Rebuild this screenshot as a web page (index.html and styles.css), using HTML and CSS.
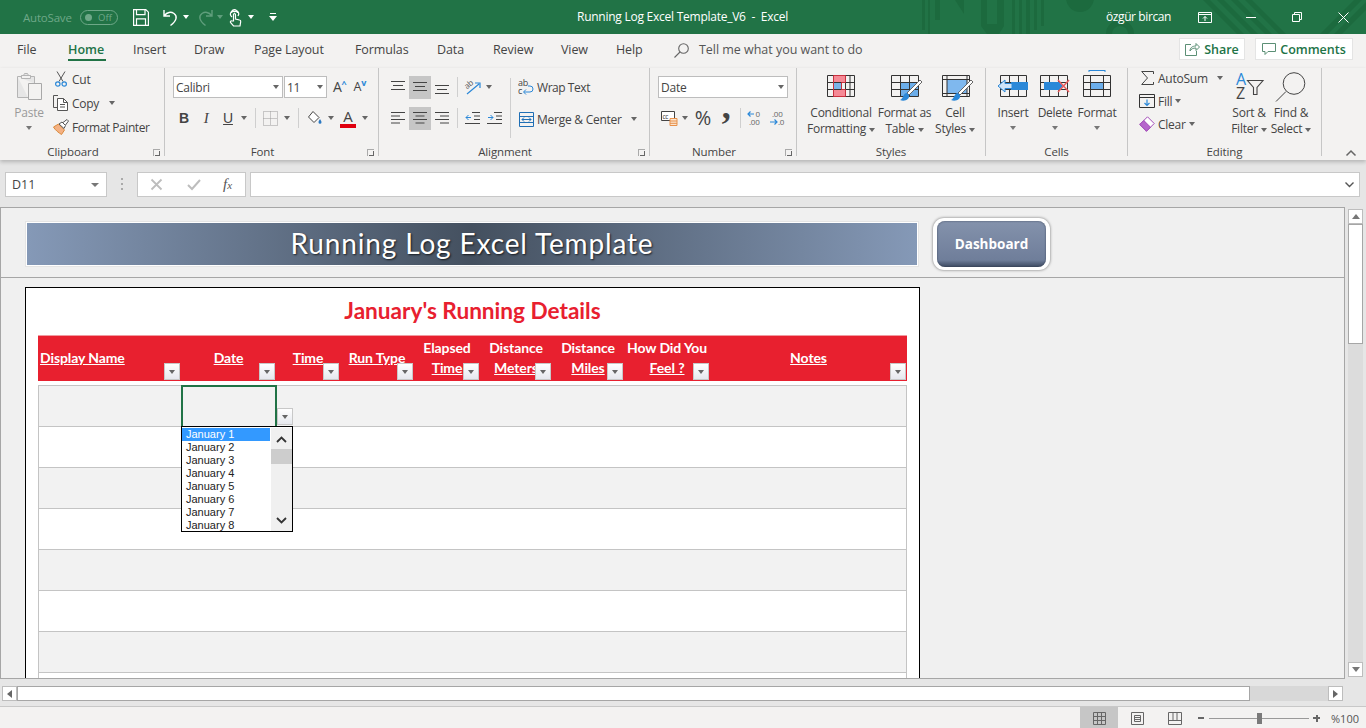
FILE: index.html
```html
<!DOCTYPE html>
<html lang="en">
<head>
<meta charset="utf-8">
<title>Running Log Excel Template_V6 - Excel</title>
<link rel="stylesheet" href="styles.css">
</head>
<body>
<div class="app">

<header class="titlebar">
  <svg class="tb-pattern" width="446" height="34" viewBox="0 0 446 34" fill="#1c6a3e">
    <path d="M2 0h3v30H2zM8 0h2v34H8zM15 0h5v20h-5zM35 0l9 14V0zM55 0h6v26l6 8h12l5-8V0h-7v24h-10V0zM92 0h3v34h-3zM99 0h3v34h-3zM106 0h4v34h-4zM114 0h3v30h-3zM121 0h3v26h-3z"/>
    <circle cx="160" cy="-2" r="14"/>
    <path d="M186 34a14 14 0 0 1 28 0h-6a8 8 0 0 0-16 0zM290 0l34 34h-7L283 0zM304 0l34 34h-7L297 0zM318 0l34 34h-7L311 0zM332 0l34 34h-7L325 0zM400 34l34-34h8l-34 34zM414 34l32-32v8l-24 24z"/>
  </svg>
  <div class="qat">
    <span class="autosave">AutoSave</span>
    <span class="toggle"><i class="toggle-dot"></i><span class="toggle-text">Off</span></span>
    <svg class="q-save" width="16" height="17" viewBox="0 0 16 17" fill="none" stroke="#fff" stroke-width="1.2"><path d="M.6.6h12.2l2.6 2.6v13.2H.6zM3.5.6v5h8.5v-5M3.5 16.4v-6.5h9v6.5"/></svg>
    <svg class="q-undo" width="15" height="17" viewBox="0 0 15 17" fill="none" stroke="#fff" stroke-width="1.4"><path d="M1 1v6h6M1.5 6.5C4 3 8 2.500 11 4.500c3.500 2.500 3 7-3.500 12"/></svg>
    <i class="caret caret-white q-c1"></i>
    <svg class="q-redo" width="15" height="17" viewBox="0 0 15 17" fill="none" stroke="#5f9e7c" stroke-width="1.4"><path d="M14 1v6H8M13.500 6.500C11 3 7 2.500 4 4.500c-3.500 2.500-3 7 3.500 12"/></svg>
    <i class="caret caret-dim q-c2"></i>
    <svg class="q-touch" width="14" height="19" viewBox="0 0 14 19" fill="none" stroke="#fff" stroke-width="1.2"><path d="M4 9a4 4 0 1 1 6-1M3.500 5a1.800 1.800 0 0 1 3-1.200 1.800 1.800 0 0 1 3 1.200M5.500 13V6.500a1 1 0 0 1 2 0V11l4 1a1.500 1.500 0 0 1 1.200 1.700L12 18H5.500L2.500 14.500c-.5-1 .5-2 1.500-1.500z"/></svg>
    <i class="caret caret-white q-c3"></i>
    <svg class="q-more" width="8" height="8" viewBox="0 0 8 8" fill="#fff"><path d="M1 0h6v1H1zM0 3h8L4 8z"/></svg>
  </div>
  <div class="doc-title">Running Log Excel Template_V6&nbsp; - &nbsp;Excel</div>
  <div class="account">
    <span class="user">özgür bircan</span>
    <svg class="w-display" width="14" height="11" viewBox="0 0 14 11" fill="none" stroke="#fff"><path d="M.5.500h13v10H.5zM.5 2.500h13M7 9V4.500M5 6.500l2-2 2 2"/></svg>
    <svg class="w-min" width="10" height="1" viewBox="0 0 10 1"><path d="M0 .5h10" stroke="#fff"/></svg>
    <svg class="w-max" width="10" height="10" viewBox="0 0 10 10" fill="none" stroke="#fff"><path d="M.5 2.500h7v7h-7zM2.500 2.500v-2h7v7h-2"/></svg>
    <svg class="w-close" width="11" height="11" viewBox="0 0 11 11" stroke="#fff"><path d="M.5.500l10 10M10.500.500l-10 10"/></svg>
  </div>
</header>

<nav class="tabs">
  <span class="tab">File</span>
  <span class="tab tab-on">Home</span>
  <span class="tab">Insert</span>
  <span class="tab">Draw</span>
  <span class="tab">Page Layout</span>
  <span class="tab">Formulas</span>
  <span class="tab">Data</span>
  <span class="tab">Review</span>
  <span class="tab">View</span>
  <span class="tab">Help</span>
  <svg class="search-ic" width="15" height="15" viewBox="0 0 15 15" fill="none" stroke="#666" stroke-width="1.1"><circle cx="9.500" cy="5.500" r="4.800"/><path d="M6 9l-5.500 5.500"/></svg>
  <span class="tab tell">Tell me what you want to do</span>
  <div class="tab-actions">
    <span class="act act-share">
      <svg width="15" height="14" viewBox="0 0 15 14" fill="none" stroke="#5b8f75"><path d="M6 2.500H.5v11h11V9M5 9c0-3 2-5 6-5V1.500L14.500 5 11 8.500V6C8 6 6 7 5 9z"/></svg>
      Share
    </span>
    <span class="act act-comments">
      <svg width="14" height="13" viewBox="0 0 14 13" fill="none" stroke="#5b8f75"><path d="M.5.500h13v8H6l-3 3v-3H.5z"/></svg>
      Comments
    </span>
  </div>
</nav>

<section class="ribbon">
  <!-- Clipboard -->
  <div class="group g-clip">
    <div class="big b-paste dim">
      <div class="big-ic">
        <svg width="28" height="30" viewBox="0 0 28 30" fill="none" stroke="#b4b4b4"><path d="M2.500 4.500h4v-1h2l1-2h3l1 2h2v1h4v7M13 25.500H2.500v-21" fill="#e6e6e6"/><path d="M6.500 3.500h9v3h-9z" fill="#f3f2f1"/><path d="M13.500 11.500h13v16h-13z" fill="#f3f2f1" stroke="#a8a8a8"/></svg>
      </div>
      <span>Paste</span>
      <i class="caret caret-line"></i>
    </div>
    <div class="stack s-clip">
      <div class="small"><span class="s-ic"><svg width="12" height="16" viewBox="0 0 12 16" fill="none"><path d="M2 .5l6 10M10 .5l-6 10" stroke="#555"/><circle cx="2.800" cy="13" r="2.200" stroke="#2b88d8" stroke-width="1.200"/><circle cx="9.200" cy="13" r="2.200" stroke="#2b88d8" stroke-width="1.200"/></svg></span>Cut</div>
      <div class="small"><span class="s-ic"><svg width="16" height="16" viewBox="0 0 16 16" fill="none" stroke="#555"><path d="M5 .5H.5v12H4"/><path d="M4.500 3.500h6l4 4v8h-10z" fill="#fff"/><path d="M10.500 3.500v4h4M7 9.500h5M7 12h5"/></svg></span>Copy<i class="caret c-copy"></i></div>
      <div class="small"><span class="s-ic"><svg width="16" height="16" viewBox="0 0 16 16"><path d="M.5 8l5-3 6 6-3 4.500C6 14 2 11 .5 8z" fill="#f4b183" stroke="#d98a3c"/><path d="M6 5l3-2 3.500 3.500L11 9.500zM10 3.500L14 .5l1.500 1.500-3 4" fill="#fff" stroke="#555"/></svg></span><span class="lbl-tight">Format Painter</span></div>
    </div>
    <div class="g-label">Clipboard</div>
    <i class="launcher"></i>
  </div>

  <!-- Font -->
  <div class="group g-font">
    <div class="rows">
      <div class="row">
        <span class="combo c-font">Calibri<i class="caret"></i></span>
        <span class="combo c-size">11<i class="caret"></i></span>
        <span class="grow-a a1">A<sup>^</sup></span>
        <span class="grow-a a2">A<sup>v</sup></span>
      </div>
      <div class="row">
        <span class="slot w22 fmt fmt-b">B</span>
        <span class="slot w22 fmt fmt-i">I</span>
        <span class="slot w22 fmt fmt-u">U</span>
        <span class="slot w10"><i class="caret"></i></span>
        <span class="slot w12"><i class="vsep"></i></span>
        <span class="slot w18"><svg width="15" height="15" viewBox="0 0 15 15" fill="none" stroke="#9a9a9a" stroke-dasharray="1 1"><path d="M.5.500h14v14H.5zM7.500.500v14M.5 7.500h14"/></svg></span>
        <span class="slot w16"><i class="caret"></i></span>
        <span class="slot w6"><i class="vsep"></i></span>
        <span class="slot w26"><svg width="15" height="14" viewBox="0 0 15 14"><path d="M6 .5l6 6-5 5-5.500-5.500z" fill="#fff" stroke="#444"/><path d="M13 8c-.8 1.500-1.500 2.300-1.500 3.200a1.500 1.500 0 0 0 3 0C14.500 10.300 13.800 9.500 13 8z" fill="#2b79c2"/></svg></span>
        <span class="slot w8"><i class="caret"></i></span>
        <span class="slot w26 color-a"><span>A</span><i class="red-bar"></i></span>
        <span class="slot w8"><i class="caret"></i></span>
      </div>
    </div>
    <div class="g-label">Font</div>
    <i class="launcher"></i>
  </div>

  <!-- Alignment -->
  <div class="group g-align">
    <div class="rows r-align">
      <div class="row">
        <span class="slot w22"><svg width="14" height="12" viewBox="0 0 14 12" stroke="#444"><path d="M0 .5h14M2 4.500h10M0 8.500h14"/></svg></span>
        <span class="slot w22 on"><svg width="14" height="10" viewBox="0 0 14 10" stroke="#444"><path d="M0 .5h14M2 4.500h10M0 8.500h14"/></svg></span>
        <span class="slot w22"><svg class="lower" width="14" height="10" viewBox="0 0 14 10" stroke="#444"><path d="M0 .5h14M2 4.500h10M0 8.500h14"/></svg></span>
        <span class="slot w8"><i class="vsep"></i></span>
        <span class="slot w36"><svg width="16" height="16" viewBox="0 0 16 16" fill="none"><text x="0" y="8" font-size="8" fill="#555" font-family="Open Sans, sans-serif" transform="rotate(-40 4 8)">ab</text><path d="M1 15L13 5M9 4h5v5" stroke="#2b88d8" stroke-width="1.200"/></svg><i class="caret c-inline"></i></span>
      </div>
      <div class="row">
        <span class="slot w22"><svg width="14" height="12" viewBox="0 0 14 12" stroke="#444"><path d="M0 .5h14M0 4h9M0 7.500h14M0 11h9"/></svg></span>
        <span class="slot w22 on"><svg width="14" height="12" viewBox="0 0 14 12" stroke="#444"><path d="M0 .5h14M2.500 4h9M0 7.500h14M2.500 11h9"/></svg></span>
        <span class="slot w22"><svg width="14" height="12" viewBox="0 0 14 12" stroke="#444"><path d="M0 .5h14M5 4h9M0 7.500h14M5 11h9"/></svg></span>
        <span class="slot w8"><i class="vsep"></i></span>
        <span class="slot w22"><svg width="15" height="12" viewBox="0 0 15 12" fill="none" stroke="#444"><path d="M7 .5h8M9 4h6M9 7.500h6M0 11.500h15"/><path d="M6 5.500H1M3.500 3L1 5.500 3.500 8" stroke="#2b88d8"/></svg></span>
        <span class="slot w22"><svg width="15" height="12" viewBox="0 0 15 12" fill="none" stroke="#444"><path d="M7 .5h8M9 4h6M9 7.500h6M0 11.500h15"/><path d="M1 5.500h5M3.500 3L6 5.500 3.500 8" stroke="#2b88d8"/></svg></span>
      </div>
    </div>
    <i class="vsep tall"></i>
    <div class="rows r-wrap">
      <div class="row"><span class="s-ic"><svg width="16" height="18" viewBox="0 0 16 18" fill="none"><text x="0" y="8" font-size="9" fill="#444" font-family="Open Sans, sans-serif">ab</text><text x="0" y="16" font-size="9" fill="#444" font-family="Open Sans, sans-serif">c</text><path d="M6 14h6a3 3 0 0 0 0-6H10M8 11.500L5.500 14 8 16.500" stroke="#2b88d8"/></svg></span><span class="lbl lbl-tight">Wrap Text</span></div>
      <div class="row"><span class="s-ic"><svg width="15" height="15" viewBox="0 0 15 15" fill="none" stroke="#1f6fb5"><path d="M.5.500h14v14H.5zM.5 4.500h14M.5 10.500h14"/><path d="M3 7.500h9M5 5.500l-2 2 2 2M10 5.500l2 2-2 2"/></svg></span><span class="lbl">Merge &amp; Center</span><i class="caret c-merge"></i></div>
    </div>
    <div class="g-label">Alignment</div>
    <i class="launcher"></i>
  </div>

  <!-- Number -->
  <div class="group g-num">
    <div class="rows">
      <div class="row"><span class="combo c-num">Date<i class="caret"></i></span></div>
      <div class="row">
        <span class="slot w22"><svg width="17" height="16" viewBox="0 0 17 16" fill="none"><path d="M.5 1.500h13v9H.5z" stroke="#444" fill="#fff"/><text x="1.500" y="8.500" font-size="6.500" fill="#333" font-family="Open Sans, sans-serif">cc</text><path d="M9 8.500h7v7H9z" fill="#fbe5d0" stroke="#e8914a"/><path d="M9 11h7M9 13.300h7" stroke="#e8914a"/></svg></span>
        <span class="slot w10"><i class="caret"></i></span>
        <span class="slot w26 pct">%</span>
        <span class="slot w20"><span class="comma">,</span></span>
        <span class="slot w8"><i class="vsep"></i></span>
        <span class="slot w21"><svg width="16" height="16" viewBox="0 0 16 16" fill="none"><path d="M7 4H1M3.500 1.500L1 4l2.500 2.500" stroke="#2b88d8" stroke-width="1.200"/><text x="8.500" y="7" font-size="8" fill="#666" font-family="Open Sans, sans-serif">0</text><text x="2" y="15" font-size="8" fill="#666" font-family="Open Sans, sans-serif">.00</text></svg></span>
        <span class="slot w23"><svg width="16" height="16" viewBox="0 0 16 16" fill="none"><text x="3" y="7" font-size="8" fill="#666" font-family="Open Sans, sans-serif">.00</text><path d="M1 12h7M5.500 9.500L8 12l-2.500 2.500" stroke="#2b88d8" stroke-width="1.200"/><text x="9" y="15" font-size="8" fill="#666" font-family="Open Sans, sans-serif">.0</text></svg></span>
      </div>
    </div>
    <div class="g-label">Number</div>
    <i class="launcher"></i>
  </div>

  <!-- Styles -->
  <div class="group g-styles">
    <div class="big b-cf">
      <div class="big-ic"><svg width="28" height="22" viewBox="0 0 28 22"><path d="M6 1h12v6H6zM6 15h12v6H6z" fill="#f58a96"/><path d="M6 8h8v6H6z" fill="#79b4e8"/><path d="M.5.500h27v21H.5zM.5 7.500h27M.5 14.500h27M6.500.500v21M18.500.500v21M23 .5v21" fill="none" stroke="#333"/><path d="M6.500.500h12v7h-4v7h4v7h-12z" fill="none" stroke="#c9303e"/></svg></div>
      <span>Conditional</span><span>Formatting<i class="caret c-inline"></i></span>
    </div>
    <div class="big b-fat">
      <div class="big-ic"><svg class="nudge" width="30" height="28" viewBox="0 0 30 28"><path d="M10 7h18v14H10z" fill="#6caeea"/><path d="M.5.500h27v21H.5zM.5 7.500h27M.5 14.500h27M9.500.500v21M18.500.500v21" fill="none" stroke="#333"/><path d="M29 5l2 2-13 13-2-2z" fill="#fff" stroke="#666"/><path d="M16 18c-4 0-3 5-7 7 5 2 10-1 9-5z" fill="#2b88d8"/></svg></div>
      <span>Format as</span><span>Table<i class="caret c-inline"></i></span>
    </div>
    <div class="big b-cs">
      <div class="big-ic"><svg class="nudge" width="30" height="28" viewBox="0 0 30 28"><path d="M5 5h20v13H5z" fill="#7fb8ee"/><path d="M.5.500h27v21H.5zM.5 4.500h27M.5 18.500h27M5 .5v21M25 .5v21" fill="none" stroke="#333"/><path d="M29 5l2 2-13 13-2-2z" fill="#fff" stroke="#666"/><path d="M16 18c-4 0-3 5-7 7 5 2 10-1 9-5z" fill="#2b88d8"/></svg></div>
      <span>Cell</span><span>Styles<i class="caret c-inline"></i></span>
    </div>
    <div class="g-label">Styles</div>
  </div>

  <!-- Cells -->
  <div class="group g-cells">
    <div class="big b-cell">
      <div class="big-ic"><svg width="32" height="22" viewBox="0 0 32 22"><path d="M3.500.500h26v21h-26zM12.500.500v21M21.500.500v21M3.500 7.500h26M3.500 14.500h26" fill="none" stroke="#333"/><path d="M14 7h17v8H14z" fill="#2b88d8"/><path d="M1 11l7-6v3.500h7v5H8V17z" fill="#cfe4f8" stroke="#2b88d8"/></svg></div>
      <span>Insert</span><i class="caret caret-line"></i>
    </div>
    <div class="big b-cell">
      <div class="big-ic"><svg width="30" height="22" viewBox="0 0 30 22"><path d="M.5.500h27v21H.5zM9.500.500v21M18.500.500v21M.5 7.500h27M.5 14.500h27" fill="none" stroke="#333"/><path d="M4 7h15v8H4z" fill="#2b88d8"/><path d="M19 7l4 4-4 4z" fill="#2b88d8"/><path d="M18 5l11 12M29 5L18 17" stroke="#ea5b5b" stroke-width="1.500"/></svg></div>
      <span>Delete</span><i class="caret caret-line"></i>
    </div>
    <div class="big b-cell">
      <div class="big-ic rise"><svg width="28" height="28" viewBox="0 0 28 28"><path d="M6 .5h16M6 0v2M22 0v2" stroke="#2b88d8" fill="none"/><path d="M8 13h13v7H8z" fill="#6caeea"/><path d="M.5 5.500h27v21H.5zM.5 12.500h27M.5 19.500h27M7.500 5.500v21M20.500 5.500v21" fill="none" stroke="#333"/></svg></div>
      <span>Format</span><i class="caret caret-line"></i>
    </div>
    <div class="g-label">Cells</div>
  </div>

  <!-- Editing -->
  <div class="group g-edit">
    <div class="stack s-edit">
      <div class="small"><span class="s-ic"><svg width="13" height="14" viewBox="0 0 13 14" fill="none" stroke="#444"><path d="M12.500 3V.5H.7L6.500 7 .7 13.500h11.800V11"/></svg></span>AutoSum<i class="caret c-auto"></i></div>
      <div class="small"><span class="s-ic"><svg width="16" height="14" viewBox="0 0 16 14" fill="none"><path d="M.5.500h15v13H.5zM.5 3.500h15" stroke="#333"/><path d="M8 5.500v6M5.500 9L8 11.500 10.500 9" stroke="#2b88d8" stroke-width="1.200"/></svg></span>Fill<i class="caret c-inline"></i></div>
      <div class="small"><span class="s-ic"><svg width="16" height="16" viewBox="0 0 16 16"><path d="M.8 8.500L8.500.8l6.700 6.700-7.700 7.700z" fill="#fff" stroke="#a24bb8"/><path d="M.8 8.500l4-4 6.700 6.700-4 4z" fill="#b667cc" stroke="#a24bb8"/></svg></span>Clear<i class="caret c-inline"></i></div>
    </div>
    <div class="big b-sort">
      <div class="big-ic"><svg width="30" height="30" viewBox="0 0 30 30" fill="none"><text x="2" y="13" font-size="16" fill="#2b88d8" font-family="Open Sans, sans-serif">A</text><text x="2" y="27" font-size="16" fill="#444" font-family="Open Sans, sans-serif">Z</text><path d="M13.500 8.500h15.500l-6 7v7h-3.500v-7z" stroke="#444" stroke-width="1.100"/></svg></div>
      <span>Sort &amp;</span><span>Filter<i class="caret c-inline"></i></span>
    </div>
    <div class="big b-sort">
      <div class="big-ic"><svg width="32" height="30" viewBox="0 0 32 30" fill="none" stroke="#444"><circle cx="19" cy="11.500" r="10.800"/><path d="M11 19.500L1 29.500"/></svg></div>
      <span>Find &amp;</span><span>Select<i class="caret c-inline"></i></span>
    </div>
    <div class="g-label">Editing</div>
  </div>

  <svg class="collapse" width="10" height="6" viewBox="0 0 10 6" fill="none" stroke="#666" stroke-width="1.500"><path d="M.5 5.500L5 1l4.500 4.500"/></svg>
</section>

<div class="formula">
  <div class="namebox">D11<i class="caret"></i></div>
  <div class="dots"></div>
  <div class="fx-btns">
    <svg width="11" height="11" viewBox="0 0 11 11" stroke="#bdbdbd" stroke-width="1.800"><path d="M.5.500l10 10M10.500.500l-10 10"/></svg>
    <svg width="14" height="11" viewBox="0 0 14 11" fill="none" stroke="#bdbdbd" stroke-width="2"><path d="M1 6l4 4 8-9"/></svg>
    <span class="fx">f<span class="fx-x">x</span></span>
  </div>
  <div class="fx-input"><svg width="9" height="6" viewBox="0 0 9 6" fill="none" stroke="#555" stroke-width="1.400"><path d="M.5.500l4 4 4-4"/></svg></div>
</div>

<main class="workspace">
  <div class="sheet">
    <div class="band">
      <div class="banner">Running Log Excel Template</div>
      <div class="dash"><span class="dash-in">Dashboard</span></div>
    </div>
    <div class="card">
      <h1 class="card-title">January's Running Details</h1>
      <div class="thead">
        <div class="th th-name"><u>Display Name</u><i class="fbtn"></i></div>
        <div class="th th-date"><u>Date</u><i class="fbtn"></i></div>
        <div class="th th-time"><u>Time</u><i class="fbtn"></i></div>
        <div class="th th-type"><u>Run Type</u><i class="fbtn"></i></div>
        <div class="th th-el"><span>Elapsed</span><u>Time</u><i class="fbtn"></i></div>
        <div class="th th-me"><span>Distance</span><u>Meters</u><i class="fbtn"></i></div>
        <div class="th th-mi"><span>Distance</span><u>Miles</u><i class="fbtn"></i></div>
        <div class="th th-fe"><span>How Did You</span><u>Feel ?</u><i class="fbtn"></i></div>
        <div class="th th-no"><u>Notes</u><i class="fbtn"></i></div>
      </div>
      <div class="tbody">
        <div class="tr tr-first">
          <div class="sel-cell"></div>
          <i class="fbtn cell-btn"></i>
          <div class="dropdown">
            <ul class="dd-list">
              <li class="dd-on">January 1</li>
              <li>January 2</li>
              <li>January 3</li>
              <li>January 4</li>
              <li>January 5</li>
              <li>January 6</li>
              <li>January 7</li>
              <li>January 8</li>
            </ul>
            <div class="dd-scroll">
              <svg width="11" height="7" viewBox="0 0 11 7" fill="none" stroke="#333" stroke-width="1.800"><path d="M1 6l4.500-4.500L10 6"/></svg>
              <i class="dd-thumb"></i>
              <svg class="dd-down" width="11" height="7" viewBox="0 0 11 7" fill="none" stroke="#333" stroke-width="1.800"><path d="M1 1l4.500 4.500L10 1"/></svg>
            </div>
          </div>
        </div>
        <div class="tr"></div>
        <div class="tr"></div>
        <div class="tr"></div>
        <div class="tr"></div>
        <div class="tr"></div>
        <div class="tr"></div>
        <div class="tr"></div>
      </div>
    </div>
  </div>
  <div class="vscroll">
    <span class="sb-btn"><i class="tri tri-up"></i></span>
    <span class="v-thumb"></span>
    <span class="v-track"></span>
    <span class="sb-btn"><i class="tri tri-down"></i></span>
  </div>
</main>

<div class="hscroll">
  <span class="sb-btn"><i class="tri tri-left"></i></span>
  <span class="h-thumb"></span>
  <span class="h-track"></span>
  <span class="sb-btn"><i class="tri tri-right"></i></span>
</div>

<footer class="status">
  <span class="view view-on"><svg width="13" height="13" viewBox="0 0 13 13" fill="none" stroke="#666"><path d="M.5.500h12v12H.5zM4.500.500v12M8.500.500v12M.5 4.500h12M.5 8.500h12"/></svg></span>
  <span class="view"><svg width="13" height="13" viewBox="0 0 13 13" fill="none" stroke="#666"><path d="M.5.500h12v12H.5zM3.500 3.500h6v6h-6zM3.500 5.500h6M3.500 7.500h6"/></svg></span>
  <span class="view"><svg width="14" height="13" viewBox="0 0 14 13" fill="none" stroke="#666"><path d="M.5.500h13v12H.5zM.5 8.500h13M5 .5v8M9 .5v8"/></svg></span>
  <span class="zoom-minus"></span>
  <span class="zoom-line"><i class="zoom-thumb"></i></span>
  <span class="zoom-plus"></span>
  <span class="zoom-val">%100</span>
</footer>

</div>
</body>
</html>
```

FILE: styles.css
```css
* { box-sizing: border-box; }
html, body { margin: 0; padding: 0; }
body { width: 1366px; height: 728px; overflow: hidden; font-family: "Open Sans", "Noto Sans", sans-serif; color: #444; background: #f3f2f1; }
i { display: block; font-style: normal; }
svg { display: block; flex: none; overflow: visible; }
.app { width: 1366px; height: 728px; display: flex; flex-direction: column; overflow: hidden; }

/* carets */
.caret { width: 0; height: 0; border: 3px solid transparent; border-top: 4px solid #666; border-bottom: 0; flex: none; }
.caret-white { border-top-color: #fff; }
.caret-dim { border-top-color: #5f9e7c; }
.caret-line { margin-top: 5px; border-top-color: #777; }
.c-inline { display: inline-block; vertical-align: middle; margin-left: 3px; }

/* title bar */
.titlebar { position: relative; height: 34px; flex: none; background: #217346; color: #fff; display: grid; grid-template-columns: 470px 425px 471px; align-items: center; overflow: hidden; }
.tb-pattern { position: absolute; left: 920px; top: 0; overflow: hidden; }
.qat { position: relative; display: flex; align-items: center; padding-left: 23px; }
.autosave { width: 57px; font-size: 11.500px; color: #6ea888; letter-spacing: -0.200px; }
.toggle { width: 38px; height: 15px; border: 1px solid #6ea888; border-radius: 8px; display: flex; align-items: center; padding-left: 4px; color: #6ea888; font-size: 9.500px; }
.toggle-dot { width: 7px; height: 7px; border-radius: 50%; background: #6ea888; margin-right: 6px; }
.q-save { margin-left: 15px; }
.q-undo { margin-left: 14px; }
.q-c1 { margin-left: 5px; }
.q-redo { margin-left: 9px; }
.q-c2 { margin-left: 4px; }
.q-touch { margin-left: 5px; }
.q-c3 { margin-left: 6px; }
.q-more { margin-left: 15px; }
.doc-title { position: relative; text-align: center; font-size: 12px; white-space: nowrap; letter-spacing: -0.250px; padding-bottom: 2px; }
.account { position: relative; display: flex; align-items: center; padding-left: 211px; }
.user { width: 66px; font-size: 12px; white-space: nowrap; letter-spacing: -0.400px; padding-bottom: 2px; }
.w-display { margin-left: 26px; }
.w-min { margin-left: 34px; }
.w-max { margin-left: 36px; }
.w-close { margin-left: 36px; }

/* tabs */
.tabs { height: 34px; flex: none; position: relative; background: #f3f2f1; display: grid; grid-template-columns: 51px 65px 61px 60px 101px 82px 56px 68px 55px 58px 25px auto; padding: 0 0 2px 17px; align-items: center; font-size: 12.500px; color: #444; }
.tab { white-space: nowrap; letter-spacing: -0.100px; line-height: 30px; }
.tab-on { position: relative; color: #217346; font-weight: 600; letter-spacing: 0; }
.tab-on::after { content: ""; position: absolute; left: 0; top: 24px; width: 38px; height: 2px; background: #217346; }
.tell { letter-spacing: -0.030px; color: #555; }
.tab-actions { position: absolute; left: 1179px; top: 4px; display: flex; gap: 10px; }
.act { height: 22px; background: #fff; border: 1px solid #e4e4e4; color: #217346; font-weight: 600; font-size: 12.500px; display: flex; align-items: center; justify-content: center; gap: 4px; }
.act-share { width: 66px; }
.act-comments { width: 98px; }

/* ribbon */
.ribbon { position: relative; z-index: 2; height: 92px; flex: none; background: #f3f2f1; display: flex; font-size: 12px; box-shadow: 0 2px 4px rgba(0,0,0,.22); letter-spacing: -0.250px; }
.group { position: relative; height: 88px; flex: none; display: flex; border-right: 1px solid #c6c6c6; }
.g-clip { width: 165px; padding-left: 9px; }
.g-font { width: 214px; padding-left: 8px; }
.g-align { width: 271px; padding-left: 8px; }
.g-num { width: 147px; padding-left: 8px; }
.g-styles { width: 189px; padding-left: 9px; }
.g-cells { width: 142px; padding-left: 6px; }
.g-edit { width: 194px; padding-left: 11px; }
.g-label { position: absolute; left: 0; right: 0; top: 76px; text-align: center; font-size: 11.500px; line-height: 16px; color: #444; letter-spacing: -0.100px; }
.g-clip .g-label, .g-font .g-label, .g-align .g-label, .g-num .g-label { right: 18px; }
.launcher { position: absolute; right: 4px; top: 81px; width: 7px; height: 7px; border-left: 1px solid #aaa; border-top: 1px solid #aaa; }
.launcher::after { content: ""; position: absolute; right: 0; bottom: 0; width: 4px; height: 4px; border-right: 1px solid #666; border-bottom: 1px solid #666; }

.big { display: flex; flex-direction: column; align-items: center; padding-top: 4px; line-height: 16px; white-space: nowrap; flex: none; }
.big-ic { height: 33px; display: flex; align-items: flex-start; justify-content: center; }
.dim { color: #9a9a9a; }
.b-paste { width: 40px; }
.b-cf { width: 70px; }
.b-cf .big-ic, .b-cell .big-ic { padding-top: 3px; }
.b-fat { width: 57px; }
.b-fat .big-ic, .b-cs .big-ic { padding-top: 3px; }
.nudge { margin-left: 3px; }
.b-cs { width: 44px; }
.b-cell { width: 42px; }
.b-cell .rise { padding-top: 0; margin-top: -2px; height: 35px; }
.b-sort { width: 42px; }
.stack { display: flex; flex-direction: column; gap: 2px; }
.s-clip { margin-left: 4px; }
.s-edit { width: 89px; gap: 1px; margin-top: -1px; }
.small { height: 22px; display: flex; align-items: center; white-space: nowrap; }
.s-ic { width: 16px; margin-right: 3px; display: flex; justify-content: center; flex: none; }
.c-copy { margin-left: 10px; }
.c-auto { margin-left: 9px; }
.lbl-tight { letter-spacing: -0.450px; }

.rows { display: flex; flex-direction: column; gap: 7px; padding-top: 7px; }
.row { display: flex; align-items: center; height: 24px; }
.slot { display: flex; align-items: center; justify-content: center; height: 24px; flex: none; }
.w6 { width: 6px; } .w8 { width: 8px; } .w10 { width: 10px; } .w12 { width: 12px; }
.w16 { width: 16px; } .w18 { width: 18px; } .w20 { width: 20px; } .w21 { width: 21px; }
.w22 { width: 22px; } .w23 { width: 23px; } .w26 { width: 26px; } .w36 { width: 36px; }
.vsep { width: 1px; height: 20px; background: #cfcfcf; }
.vsep.tall { height: 60px; margin: 10px 7px 0 5px; background: #cfcfcf; flex: none; }
.on { background: #c6c6c6; height: 23px; }
.lower { margin-top: 5px; }

.combo { position: relative; height: 22px; background: #fff; border: 1px solid #bdbdbd; display: flex; align-items: center; padding-left: 2px; color: #444; font-size: 12px; flex: none; }
.combo .caret { position: absolute; right: 3px; top: 8px; }
.c-font { width: 110px; }
.c-size { width: 43px; margin-left: 1px; }
.c-num { width: 130px; }
.grow-a { font-size: 14px; color: #444; line-height: 16px; }
.grow-a sup { font-size: 9px; color: #2b88d8; line-height: 0; font-weight: 700; vertical-align: 5px; }
.a1 { margin-left: 6px; }
.a2 { margin-left: 7px; font-size: 12.500px; }
.fmt { font-size: 14px; color: #444; font-family: "Liberation Sans", sans-serif; }
.fmt-b { font-weight: 700; }
.fmt-i { font-style: italic; font-family: "Liberation Serif", serif; font-size: 15px; }
.fmt-u { text-decoration: underline; }
.color-a { flex-direction: column; font-size: 15px; line-height: 14px; letter-spacing: 0; }
.red-bar { width: 16px; height: 4px; background: #e0000f; margin-top: 1px; }
.r-align .c-inline { margin-left: 4px; }
.r-wrap { padding-top: 7px; }
.r-wrap .row:last-child { padding-top: 2px; }
.lbl { white-space: nowrap; }
.c-merge { margin-left: 9px; }
.pct { font-size: 20px; line-height: 24px; }
.comma { font-size: 36px; font-weight: 700; line-height: 24px; font-family: "Liberation Serif", serif; margin-bottom: 24px; color: #444; }
.collapse { position: absolute; left: 1346px; top: 82px; }

/* formula */
.formula { height: 47px; flex: none; background: #e6e6e6; display: flex; align-items: flex-start; padding: 12px 0 0 5px; }
.namebox { position: relative; width: 102px; height: 25px; background: #fff; border: 1px solid #c8c8c8; font-size: 12.500px; line-height: 23px; padding-left: 6px; color: #444; }
.namebox .caret { position: absolute; right: 7px; top: 10px; border-top-color: #777; border-width: 4px 4px 0 4px; }
.dots { width: 2px; height: 12px; margin: 6px 14px 0 14px; background: repeating-linear-gradient(#aaa 0 2px, transparent 2px 5px); }
.fx-btns { width: 109px; height: 25px; background: #fff; border: 1px solid #c8c8c8; display: flex; align-items: center; padding-left: 13px; gap: 25px; }
.fx { font-family: "Liberation Serif", serif; font-style: italic; font-size: 15px; color: #555; margin-left: -3px; }
.fx-x { font-size: 11px; }
.fx-input { width: 1110px; height: 25px; margin-left: 4px; background: #fff; border: 1px solid #c8c8c8; display: flex; align-items: center; justify-content: flex-end; padding-right: 5px; }

/* workspace */
.workspace { height: 472px; flex: none; display: flex; background: #e6e6e6; }
.sheet { width: 1345px; height: 472px; flex: none; background: #f0f0f0; border: 1px solid #a6a6a6; overflow: hidden; }
.band { height: 70px; border-bottom: 1px solid #a6a6a6; display: flex; align-items: flex-start; }
.banner { width: 892px; height: 44px; margin: 14px 0 0 25px; background: linear-gradient(90deg, #8599b7 0%, #44505f 50%, #8599b7 100%); border: 1px solid #fff; outline: 1px solid #e4e4e4; color: #fff; font-family: Lato, sans-serif; font-size: 28px; letter-spacing: 0.850px; line-height: 40px; text-align: center; text-shadow: 1px 1px 2px rgba(0,0,0,.7); }
.dash { width: 117px; height: 52px; margin: 10px 0 0 15px; background: #fff; border-radius: 11px; padding: 3px 4px; box-shadow: 0 0 3px rgba(0,0,0,.55); }
.dash-in { display: block; height: 46px; border-radius: 8px; background: linear-gradient(#8492ac, #6f7e9a 85%, #56647e 92%, #3f4b62); color: #fff; font-family: "Open Sans", sans-serif; font-weight: 700; font-size: 13.500px; line-height: 46px; text-align: center; box-shadow: inset 0 0 2px rgba(40,50,70,.8); }
.card { width: 895px; height: 420px; margin: 9px 0 0 24px; background: #fff; border: 1px solid #000; padding-left: 12px; }
.card-title { height: 47px; margin: 0 0 0 -12px; text-align: center; color: #e8202f; font-family: Lato, sans-serif; font-weight: 700; font-size: 22.600px; line-height: 46px; }
.thead { width: 869px; height: 46px; background: #e8202f; display: grid; grid-template-columns: 143px 95px 64px 74px 66px 72px 72px 86px 197px; border-top: 1px solid #f09aa0; color: #fff; font-family: Lato, sans-serif; font-weight: 700; font-size: 14px; letter-spacing: -0.100px; }
.th { position: relative; display: flex; flex-direction: column; align-items: center; justify-content: center; line-height: 20px; white-space: nowrap; padding-bottom: 2px; }
.th-name { align-items: flex-start; padding-left: 2px; }
.fbtn { position: absolute; right: 1px; bottom: 1px; width: 16px; height: 17px; background: linear-gradient(#fff, #e6e8ee); border: 1px solid #c8c8c8; }
.fbtn::after { content: ""; position: absolute; left: 4px; top: 6px; border: 3px solid transparent; border-top: 4px solid #666; border-bottom: 0; }
.tbody { margin-top: 4px; width: 869px; }
.tr { height: 41px; background: #fff; border: 1px solid #c4c4c4; border-bottom: 0; }
.tr:nth-child(odd) { background: #f2f2f2; }
.tr-first { position: relative; }
.sel-cell { position: absolute; left: 142px; top: -1px; width: 96px; height: 43px; border: 2px solid #217346; }
.cell-btn { right: auto; bottom: auto; left: 238px; top: 22px; }
.dropdown { position: absolute; left: 142px; top: 40px; width: 112px; height: 106px; background: #fff; border: 1px solid #000; padding: 1px 0 0 0; display: flex; z-index: 3; }
.dd-list { list-style: none; margin: 0; padding: 0; width: 88px; flex: none; overflow: hidden; font-family: "Liberation Sans", sans-serif; font-size: 11px; color: #222; }
.dd-list li { height: 13px; line-height: 13px; padding-left: 4px; }
.dd-on { background: #3399ff; color: #fff; }
.dd-scroll { position: relative; width: 21px; height: 103px; margin-left: 1px; background: #f0f0f0; display: flex; flex-direction: column; align-items: center; padding-top: 8px; }
.dd-thumb { width: 21px; height: 15px; background: #cdcdcd; margin-top: 6px; }
.dd-down { position: absolute; left: 5px; top: 89px; }

/* scrollbars */
.sb-btn { width: 15px; height: 15px; background: #fff; border: 1px solid #bdbdbd; display: flex; align-items: center; justify-content: center; flex: none; }
.tri { width: 0; height: 0; border: 4px solid transparent; }
.tri-up { border-bottom: 5px solid #777; border-top: 0; }
.tri-down { border-top: 5px solid #777; border-bottom: 0; }
.tri-left { border-right: 5px solid #666; border-left: 0; }
.tri-right { border-left: 5px solid #666; border-right: 0; }
.vscroll { width: 21px; flex: none; display: flex; flex-direction: column; padding: 2px 0 2px 3px; }
.v-thumb { width: 15px; height: 120px; background: #fff; border: 1px solid #a6a6a6; flex: none; }
.v-track { flex: 1; width: 15px; background: #dcdcdc; }
.hscroll { height: 28px; flex: none; background: #e6e6e6; display: flex; padding: 7px 0 0 2px; align-items: flex-start; border-bottom: 1px solid #c8c8c8; }
.hscroll .sb-btn { height: 15px; }
.h-thumb { width: 1233px; height: 15px; background: #fff; border: 1px solid #a6a6a6; flex: none; }
.h-track { width: 78px; height: 15px; background: #d8d8d8; flex: none; }

/* status */
.status { flex: 1; background: #f3f2f1; display: flex; align-items: center; padding-left: 1080px; }
.view { width: 38px; height: 22px; display: flex; align-items: center; justify-content: center; flex: none; }
.view-on { background: #c6c6c6; }
.zoom-minus { width: 6px; height: 2px; background: #666; margin-left: 4px; flex: none; }
.zoom-line { position: relative; width: 100px; height: 1px; background: #999; margin-left: 5px; flex: none; }
.zoom-thumb { position: absolute; left: 48px; top: -5px; width: 5px; height: 11px; background: #7a7a7a; }
.zoom-plus { position: relative; width: 7px; height: 7px; margin-left: 4px; background: linear-gradient(#666,#666) center/7px 2px no-repeat, linear-gradient(#666,#666) center/2px 7px no-repeat; flex: none; }
.zoom-val { margin-left: 11px; font-size: 11px; color: #555; white-space: nowrap; }
```
